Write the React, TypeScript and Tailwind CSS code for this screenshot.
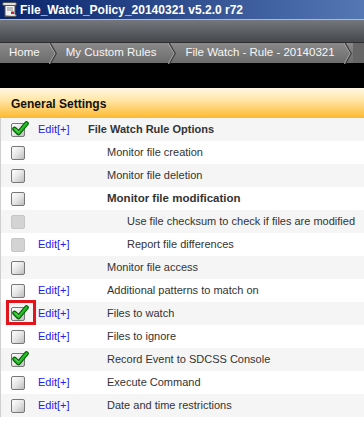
import React from "react";

type Row = {
  label: string;
  level: 0 | 1 | 2;
  state: "checked" | "unchecked" | "disabled";
  edit?: boolean;
  bold?: "sm" | "lg";
  mark?: boolean;
};

const rows: Row[] = [
  { label: "File Watch Rule Options", level: 0, state: "checked", edit: true, bold: "sm" },
  { label: "Monitor file creation", level: 1, state: "unchecked" },
  { label: "Monitor file deletion", level: 1, state: "unchecked" },
  { label: "Monitor file modification", level: 1, state: "unchecked", bold: "lg" },
  { label: "Use file checksum to check if files are modified", level: 2, state: "disabled" },
  { label: "Report file differences", level: 2, state: "disabled", edit: true },
  { label: "Monitor file access", level: 1, state: "unchecked" },
  { label: "Additional patterns to match on", level: 1, state: "unchecked", edit: true },
  { label: "Files to watch", level: 1, state: "checked", edit: true, mark: true },
  { label: "Files to ignore", level: 1, state: "unchecked", edit: true },
  { label: "Record Event to SDCSS Console", level: 1, state: "checked" },
  { label: "Execute Command", level: 1, state: "unchecked", edit: true },
  { label: "Date and time restrictions", level: 1, state: "unchecked", edit: true },
];

function CheckBox({ state }: { state: Row["state"] }) {
  if (state === "disabled") {
    return <div className="w-[14px] h-[14px] rounded-[2px] border border-[#c6c6c6] bg-[#d3d3d3]" />;
  }
  return (
    <div className="relative w-[14px] h-[14px]">
      <div className="w-[14px] h-[14px] rounded-[2px] border border-[#777] bg-[linear-gradient(135deg,#ffffff_0%,#e6e6e6_50%,#bdbdbd_100%)]" />
      {state === "checked" && (
        <svg className="absolute left-[1px] top-[-2px]" width="17" height="15" viewBox="0 0 17 15">
          <path d="M2.5 8 L6.5 12 L14.5 2.5" fill="none" stroke="#0b5d0b" strokeWidth="4.6" strokeLinecap="round" strokeLinejoin="round" />
          <path d="M2.5 8 L6.5 12 L14.5 2.5" fill="none" stroke="#22c322" strokeWidth="2.4" strokeLinecap="round" strokeLinejoin="round" />
          <path d="M3.5 8 L6.5 11" fill="none" stroke="#7ef07e" strokeWidth="0.9" strokeLinecap="round" />
        </svg>
      )}
    </div>
  );
}

function Chevron() {
  return (
    <svg width="9" height="21" viewBox="0 0 9 21" className="shrink-0">
      <path d="M1 0 L7 10.5 L1 21" fill="none" stroke="#3c3c3c" strokeWidth="1.6" />
      <path d="M0 0 L6 10.5 L0 21" fill="none" stroke="#a8a8a8" strokeWidth="1" />
    </svg>
  );
}

export default function App() {
  const font = { fontFamily: '"Liberation Sans", Arial, sans-serif' };
  return (
    <div className="w-[364px] h-[429px] overflow-hidden bg-white" style={font}>
      {/* title bar */}
      <div className="h-[19px] flex items-center bg-[linear-gradient(90deg,#0a246a_0%,#2b4a8c_45%,#5577b3_100%)]">
        <svg width="16" height="17" viewBox="0 0 16 17" className="ml-[2px] mr-[2px]">
          <rect x="3" y="2" width="10" height="13" fill="#f4f4f4" stroke="#555" strokeWidth="1" />
          <path d="M2 1.5 h11 a1.5 1.5 0 0 1 0 3 h-11 a1.5 1.5 0 0 1 0 -3z" fill="#e0e0e0" stroke="#555" strokeWidth="1" />
          <path d="M3 15.5 h10 a1.2 1.2 0 0 0 0 -2.4" fill="#ddd" stroke="#555" strokeWidth="1" />
          <line x1="5" y1="7" x2="11" y2="7" stroke="#888" />
          <line x1="5" y1="9" x2="11" y2="9" stroke="#888" />
          <rect x="9" y="10.5" width="3" height="2.5" fill="#c0262a" />
        </svg>
        <span className="text-white font-bold text-[12px] leading-none">File_Watch_Policy_20140321 v5.2.0 r72</span>
      </div>
      <div className="h-[1px] bg-[#b8b8b8]" />
      <div className="h-[22px] bg-[linear-gradient(180deg,#74777c_0%,#5c5f64_50%,#45484d_100%)]" />
      {/* breadcrumb */}
      <div className="h-[21px] flex items-center bg-[linear-gradient(180deg,#8a8a8a_0%,#7b7b7b_50%,#6c6c6c_100%)] border-t border-[#2e2e2e] text-[#f6f6f6] text-[11.5px]">
        <span className="pl-[9px] pr-[9px]">Home</span>
        <Chevron />
        <span className="pl-[8px] pr-[12px]">My Custom Rules</span>
        <Chevron />
        <span className="pl-[8px] pr-[9px] whitespace-nowrap">File Watch - Rule - 20140321</span>
        <Chevron />
        <div className="flex-1 h-full bg-[#666]" />
      </div>
      <div className="h-[25px] bg-black" />
      {/* header */}
      <div className="h-[30px] flex items-center pl-[11px] pt-[2px] bg-[linear-gradient(180deg,#fff8e4_0%,#ffe6a6_40%,#fdb92e_100%)]">
        <span className="font-bold text-[12px] text-[#111]">General Settings</span>
      </div>
      <div className="border-l border-[#cfcfcf]">
        {rows.map((r, i) => (
          <div
            key={i}
            className={`relative h-[23px] flex items-center ${i % 2 === 0 ? "bg-[#f5f5f5]" : "bg-white"}`}
          >
            <div className="w-[37px] pl-[10px] flex items-center">
              <CheckBox state={r.state} />
            </div>
            {r.mark && (
              <div className="absolute left-[5px] top-[-2px] w-[30px] h-[25px] border-[3px] border-[#e3141b]" />
            )}
            <div className="w-[50px] text-[11px] text-[#2121ee]">{r.edit ? "Edit[+]" : ""}</div>
            <div
              className={`whitespace-nowrap text-[#333] ${
                r.level === 0 ? "pl-0" : r.level === 1 ? "pl-[19px]" : "pl-[39px]"
              } ${r.bold === "sm" ? "font-bold text-[11px]" : r.bold === "lg" ? "font-bold text-[11.5px]" : "text-[11px]"}`}
            >
              {r.label}
            </div>
          </div>
        ))}
      </div>
    </div>
  );
}
